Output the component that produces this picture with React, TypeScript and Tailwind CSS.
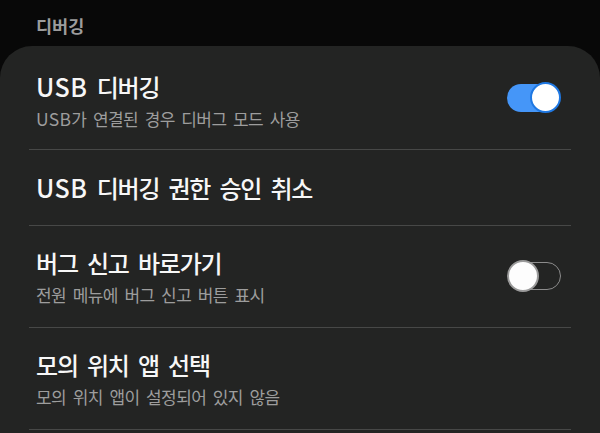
const font = { fontFamily: '"Noto Sans CJK KR", "Noto Sans", sans-serif' }

const titleCls = 'text-[24px] leading-[30px] font-medium text-[#f7f7f7] tracking-[-1.2px] [word-spacing:5px] whitespace-nowrap'
const subCls = 'text-[17px] leading-[22px] text-[#9d9d9d] tracking-[-0.6px] [word-spacing:3.4px] whitespace-nowrap'

function Toggle({ on }: { on: boolean }) {
  if (on) {
    return (
      <div className="relative w-[54px] h-[31px] flex items-center">
        <div className="w-[52px] h-[28px] rounded-full bg-[#4596f8]" />
        <div className="absolute right-0 top-0 w-[31px] h-[31px] rounded-full bg-white border-2 border-[#1f78e2]" />
      </div>
    )
  }
  return (
    <div className="relative w-[54px] h-[32px] flex items-center">
      <div className="ml-[1px] w-[53px] h-[28px] rounded-full border-[1.5px] border-[#8c8c8c]" />
      <div className="absolute left-0 top-0 w-[32px] h-[32px] rounded-full bg-[#fdfdfd] border-2 border-[#9a9a9a]" />
    </div>
  )
}

function Divider() {
  return <div className="mx-[29px] h-px bg-[#474847]" />
}

function Usb({ big }: { big?: boolean }) {
  return big ? (
    <span className="text-[25px] tracking-[0.5px]">USB</span>
  ) : (
    <span className="text-[17.5px] tracking-[0.3px]">USB</span>
  )
}

export default function App() {
  return (
    <div className="w-[600px] h-[433px] overflow-hidden bg-[#080808]" style={font}>
      {/* section header */}
      <div className="h-[46px] pl-[36px] pt-[13px]">
        <span className="text-[17.5px] leading-[26px] font-bold text-[#9c9c9c]">디버깅</span>
      </div>

      <div className="bg-[#232423] rounded-t-[32px]">
        {/* USB debugging */}
        <div className="h-[103px] pl-[36px] pr-[39px] flex justify-between">
          <div className="pt-[25px]">
            <div className={titleCls}><Usb big /> 디버깅</div>
            <div className={`mt-[6px] ${subCls}`}><Usb />가 연결된 경우 디버그 모드 사용</div>
          </div>
          <div className="pt-[36px]">
            <Toggle on />
          </div>
        </div>
        <Divider />

        {/* revoke */}
        <div className="h-[75px] pl-[36px] pt-[22px]">
          <div className={titleCls}><Usb big /> 디버깅 권한 승인 취소</div>
        </div>
        <Divider />

        {/* bug report shortcut */}
        <div className="h-[101px] pl-[36px] pr-[39px] flex justify-between">
          <div className="pt-[22px]">
            <div className={titleCls}>버그 신고 바로가기</div>
            <div className={`mt-[6px] ${subCls}`}>전원 메뉴에 버그 신고 버튼 표시</div>
          </div>
          <div className="pt-[34px]">
            <Toggle on={false} />
          </div>
        </div>
        <Divider />

        {/* mock location */}
        <div className="h-[101px] pl-[36px] pt-[22px]">
          <div className={titleCls}>모의 위치 앱 선택</div>
          <div className={`mt-[6px] ${subCls}`}>모의 위치 앱이 설정되어 있지 않음</div>
        </div>
        <Divider />
        <div className="h-[10px]" />
      </div>
    </div>
  )
}
